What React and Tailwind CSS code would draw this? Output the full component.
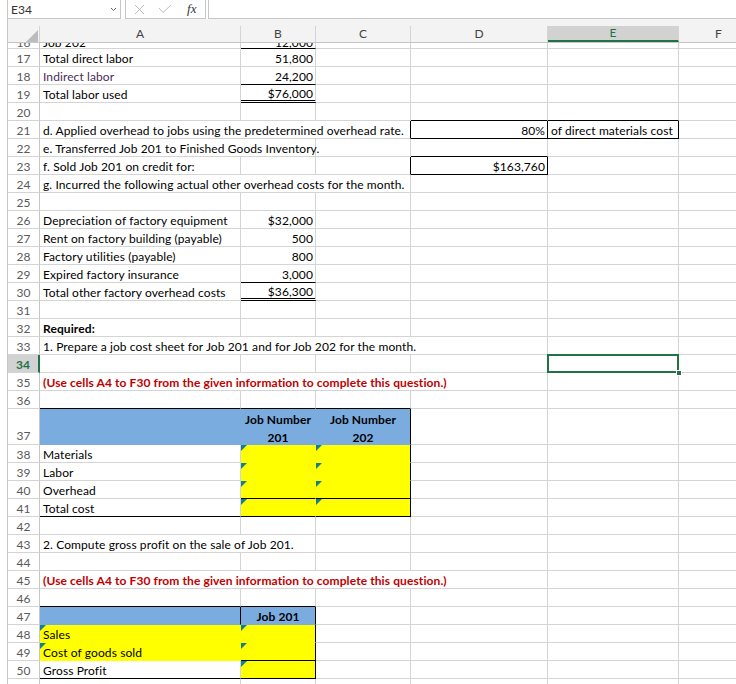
import React from 'react';

// column widths A..F (px, right gridline included)
const COLS = [201, 75, 95, 137, 131, 80];
const LETTERS = ['A', 'B', 'C', 'D', 'E', 'F'];

const RIGHT = {
  g: 'border-r-[#d4d4d4]',
  k: 'border-r-black',
  b: 'border-r-[#7aace0]',
  y: 'border-r-[#ffff00]',
};
const BOTTOM = {
  g: 'border-b border-b-[#d4d4d4]',
  k: 'border-b border-b-black',
  b: 'border-b border-b-[#7aace0]',
  y: 'border-b border-b-[#ffff00]',
  d: 'border-b-[3px] border-double border-b-black',
};
const FILL = { b: 'bg-[#7aace0]', y: 'bg-[#ffff00]' };
const ALIGN = { l: 'justify-start pl-[3px]', r: 'justify-end pr-[2px]', c: 'justify-center text-center' };

const RED = '(Use cells A4 to F30 from the given information to complete this question.)';
const Y = { bg: 'y', r: 'y', b: 'y', tri: true };
const YK = { bg: 'y', r: 'k', b: 'y', tri: true };

const rows = [
  { n: 17, c: [{ t: 'Total direct labor' }, { t: '51,800', a: 'r' }] },
  { n: 18, c: [{ t: 'Indirect labor', cls: 'text-[#4a2a58]' }, { t: '24,200', a: 'r', b: 'k' }] },
  { n: 19, c: [{ t: 'Total labor used' }, { t: '$76,000', a: 'r', b: 'd' }] },
  { n: 20, c: [{}, {}, {}, { b: 'k' }, { b: 'k' }] },
  {
    n: 21,
    c: [
      { s: 3, t: 'd. Applied overhead to jobs using the predetermined overhead rate.', r: 'k' },
      { t: '80%', a: 'r', r: 'k', b: 'k' },
      { t: 'of direct materials cost', r: 'k', b: 'k' },
    ],
  },
  { n: 22, c: [{ s: 2, t: 'e. Transferred Job 201 to Finished Goods Inventory.' }, {}, { b: 'k' }] },
  { n: 23, c: [{ t: 'f. Sold Job 201 on credit for:' }, {}, { r: 'k' }, { t: '$163,760', a: 'r', r: 'k', b: 'k' }] },
  { n: 24, c: [{ s: 3, t: 'g. Incurred the following actual other overhead costs for the month.' }] },
  { n: 25, c: [] },
  { n: 26, c: [{ t: 'Depreciation of factory equipment' }, { t: '$32,000', a: 'r' }] },
  { n: 27, c: [{ t: 'Rent on factory building (payable)' }, { t: '500', a: 'r' }] },
  { n: 28, c: [{ t: 'Factory utilities (payable)' }, { t: '800', a: 'r' }] },
  { n: 29, c: [{ t: 'Expired factory insurance' }, { t: '3,000', a: 'r', b: 'k' }] },
  { n: 30, c: [{ t: 'Total other factory overhead costs' }, { t: '$36,300', a: 'r', b: 'd' }] },
  { n: 31, c: [] },
  { n: 32, c: [{ t: 'Required:', cls: 'font-bold' }] },
  { n: 33, c: [{ s: 4, t: '1. Prepare a job cost sheet for Job 201 and for Job 202 for the month.' }] },
  { n: 34, sel: true, c: [{}, {}, {}, {}, { sel: true }] },
  { n: 35, c: [{ s: 4, t: RED, cls: 'font-bold text-[#c00000]' }] },
  { n: 36, c: [{ b: 'k' }, { b: 'k' }, { b: 'k' }] },
  {
    n: 37,
    tall: true,
    c: [
      { bg: 'b', r: 'b', b: 'b' },
      { bg: 'b', r: 'b', b: 'b', a: 'c', t: ['Job Number', '201'], cls: 'font-bold' },
      { bg: 'b', r: 'k', b: 'b', a: 'c', t: ['Job Number', '202'], cls: 'font-bold' },
    ],
  },
  { n: 38, c: [{ t: 'Materials' }, Y, YK] },
  { n: 39, c: [{ t: 'Labor' }, Y, YK] },
  { n: 40, c: [{ t: 'Overhead' }, { ...Y, b: 'k' }, { ...YK, b: 'k' }] },
  { n: 41, c: [{ t: 'Total cost', b: 'k' }, { ...Y, b: 'k' }, { ...YK, b: 'k' }] },
  { n: 42, c: [] },
  { n: 43, c: [{ s: 2, t: '2. Compute gross profit on the sale of Job 201.' }] },
  { n: 44, c: [] },
  { n: 45, c: [{ s: 4, t: RED, cls: 'font-bold text-[#c00000]' }] },
  { n: 46, c: [{ b: 'k' }, { b: 'k' }] },
  { n: 47, c: [{ bg: 'b', r: 'k', b: 'b' }, { bg: 'b', r: 'k', b: 'b', a: 'c', t: 'Job 201', cls: 'font-bold' }] },
  { n: 48, c: [{ ...Y, t: 'Sales' }, YK] },
  { n: 49, c: [{ ...Y, t: 'Cost of goods sold' }, { ...YK, b: 'k' }] },
  { n: 50, c: [{ t: 'Gross Profit', b: 'k' }, { bg: 'y', r: 'k', b: 'k', tri: true }] },
  { n: 51, c: [] },
];

function Tri() {
  return (
    <svg className="absolute left-0 top-0" width="6" height="6" viewBox="0 0 6 6">
      <polygon points="0,0 6,0 0,6" fill="#13808e" />
    </svg>
  );
}

function Cell({ col, s = 1, t, a = 'l', bg, r = 'g', b = 'g', tri, cls = '', sel, tall }) {
  const w = COLS.slice(col, col + s).reduce((x, y) => x + y, 0);
  const lines = Array.isArray(t) ? t : t ? [t] : [];
  return (
    <div
      style={{ width: w }}
      className={`relative flex h-full shrink-0 whitespace-nowrap border-r ${RIGHT[r]} ${BOTTOM[b]} ${
        FILL[bg] || ''
      } ${ALIGN[a]} ${tall ? 'items-end' : 'items-center'} ${cls}`}
    >
      {tri && <Tri />}
      {lines.length > 0 && (
        <div className={`relative ${tall ? 'top-[3px] leading-[18px]' : 'top-[1px] leading-[14px]'}`}>
          {lines.map((l, i) => (
            <div key={i}>{l}</div>
          ))}
        </div>
      )}
      {sel && (
        <>
          <div className="pointer-events-none absolute left-[-1px] top-[-1px] z-10 h-[calc(100%+2px)] w-[calc(100%+2px)] border-2 border-[#217346]" />
          <div className="absolute bottom-[-4px] right-[-4px] z-20 h-[6px] w-[6px] border border-white bg-[#217346]" />
        </>
      )}
    </div>
  );
}

function RowHead({ n, sel, tall }) {
  return (
    <div
      className={`flex w-[32px] shrink-0 justify-center border-b border-b-[#d4d4d4] ${
        sel
          ? 'border-r-2 border-r-[#217346] bg-[#d2d2d2] font-bold text-[#217346]'
          : 'border-r border-r-[#c6c6c6] text-[#5a5a5a]'
      } ${tall ? 'items-end' : 'items-center'}`}
    >
      <span className={`relative leading-[14px] ${tall ? 'top-[-1px]' : 'top-[1px]'}`}>{n}</span>
    </div>
  );
}

function Row({ n, c = [], sel, tall }) {
  const cells = [];
  let col = 0;
  c.forEach((cell) => {
    cells.push(<Cell key={col} col={col} tall={tall} {...cell} />);
    col += cell.s || 1;
  });
  while (col < COLS.length) {
    cells.push(<Cell key={col} col={col} />);
    col += 1;
  }
  return (
    <div className={`flex ${tall ? 'h-[36px]' : 'h-[18px]'}`}>
      <RowHead n={n} sel={sel} tall={tall} />
      {cells}
    </div>
  );
}

function FormulaBar() {
  return (
    <div className="flex h-[19px] bg-white">
      <div className="flex w-[113px] items-center justify-between border-b border-r border-[#c6c6c6] pl-[3px] pr-[3px] text-[#333]">
        <span className="relative top-[1px]">E34</span>
        <svg width="7" height="5" viewBox="0 0 7 5">
          <polyline points="1,1 3.5,3.5 6,1" fill="none" stroke="#666" strokeWidth="1" />
        </svg>
      </div>
      <div className="ml-[4px] flex w-[81px] items-center border-b border-l border-r border-[#c6c6c6]">
        <svg className="ml-[8px]" width="11" height="11" viewBox="0 0 11 11">
          <path d="M1 1 L10 10 M10 1 L1 10" stroke="#bdbdbd" strokeWidth="1" />
        </svg>
        <svg className="ml-[13px]" width="14" height="10" viewBox="0 0 14 10">
          <polyline points="1,4 5,8.5 13,1" fill="none" stroke="#bdbdbd" strokeWidth="1" />
        </svg>
        <span className="ml-[15px] font-['Liberation_Serif',serif] text-[13px] italic text-[#333]">fx</span>
      </div>
      <div className="ml-[2px] flex-1 border-b border-l border-[#c6c6c6]" />
    </div>
  );
}

function ColumnHeads() {
  return (
    <div className="bg-[#f3f3f3] pt-[7px]">
      <div className="flex h-[17px] border-b border-b-[#c6c6c6]">
        <div className="relative w-[32px] shrink-0 border-r border-r-[#d4d4d4]">
          <svg className="absolute bottom-0 right-[1px]" width="12" height="12" viewBox="0 0 12 12">
            <polygon points="12,0 12,12 0,12" fill="#bcbcbc" />
          </svg>
        </div>
        {LETTERS.map((l, i) => (
          <div
            key={l}
            style={{ width: COLS[i] }}
            className={`flex shrink-0 items-center justify-center border-r border-r-[#d4d4d4] ${
              l === 'E' ? 'border-b-2 border-b-[#217346] bg-[#d2d2d2] text-[#217346]' : 'text-[#444]'
            }`}
          >
            {l}
          </div>
        ))}
      </div>
    </div>
  );
}

export default function App() {
  return (
    <div className="h-[684px] w-[736px] overflow-hidden bg-white font-['Lato',sans-serif] text-[12px] tracking-[0.1px] text-black">
      <div className="ml-[7px] h-full overflow-hidden border-l border-l-[#c6c6c6]">
        <FormulaBar />
        <ColumnHeads />
        {/* row 16, scrolled mostly out of view */}
        <div className="flex h-[6px] overflow-hidden">
          <div className="flex w-[32px] shrink-0 items-end justify-center border-b border-r border-b-[#d4d4d4] border-r-[#c6c6c6] text-[#5a5a5a]">
            <span className="leading-[10px]">16</span>
          </div>
          <div style={{ width: COLS[0] }} className="flex shrink-0 items-end border-b border-r border-b-[#d4d4d4] border-r-[#d4d4d4] pl-[3px]">
            <span className="leading-[10px]">Job 202</span>
          </div>
          <div style={{ width: COLS[1] }} className="flex shrink-0 items-end justify-end border-b border-r border-b-black border-r-[#d4d4d4] pr-[2px]">
            <span className="leading-[10px]">12,000</span>
          </div>
          {COLS.slice(2).map((w, i) => (
            <div key={i} style={{ width: w }} className="shrink-0 border-b border-r border-[#d4d4d4]" />
          ))}
        </div>
        {rows.map((r) => (
          <Row key={r.n} {...r} />
        ))}
      </div>
    </div>
  );
}
